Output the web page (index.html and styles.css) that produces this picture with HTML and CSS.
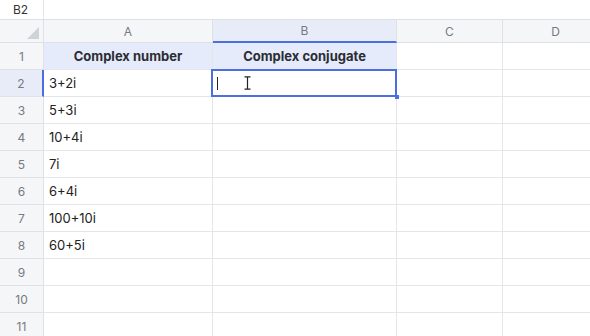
FILE: index.html
```html
<!DOCTYPE html>
<html>
<head>
<meta charset="utf-8">
<link rel="stylesheet" href="styles.css">
</head>
<body>
<div class="topbar">
  <div class="namebox">B2</div>
  <div class="formula"></div>
</div>
<div class="sheet">
  <div class="corner"><span class="tri"></span></div>
  <div class="colhead">A</div>
  <div class="colhead sel">B</div>
  <div class="colhead">C</div>
  <div class="colhead">D</div>

  <div class="rowhead">1</div>
  <div class="cell th">Complex number</div>
  <div class="cell th">Complex conjugate</div>
  <div class="cell"></div>
  <div class="cell"></div>

  <div class="rowhead sel">2</div>
  <div class="cell">3+2i</div>
  <div class="cell active"><span class="frame"></span><span class="caret"></span>
    <svg class="ibeam" width="7" height="14" viewBox="0 0 7 14"><path d="M0.5 0.8h6M3.5 0.8v12.4M0.5 13.2h6" stroke="#222" stroke-width="1.2" fill="none"/></svg>
    <span class="handle"></span>
  </div>
  <div class="cell"></div>
  <div class="cell"></div>

  <div class="rowhead">3</div>
  <div class="cell">5+3i</div>
  <div class="cell"></div>
  <div class="cell"></div>
  <div class="cell"></div>

  <div class="rowhead">4</div>
  <div class="cell">10+4i</div>
  <div class="cell"></div>
  <div class="cell"></div>
  <div class="cell"></div>

  <div class="rowhead">5</div>
  <div class="cell">7i</div>
  <div class="cell"></div>
  <div class="cell"></div>
  <div class="cell"></div>

  <div class="rowhead">6</div>
  <div class="cell">6+4i</div>
  <div class="cell"></div>
  <div class="cell"></div>
  <div class="cell"></div>

  <div class="rowhead">7</div>
  <div class="cell">100+10i</div>
  <div class="cell"></div>
  <div class="cell"></div>
  <div class="cell"></div>

  <div class="rowhead">8</div>
  <div class="cell">60+5i</div>
  <div class="cell"></div>
  <div class="cell"></div>
  <div class="cell"></div>

  <div class="rowhead">9</div>
  <div class="cell"></div>
  <div class="cell"></div>
  <div class="cell"></div>
  <div class="cell"></div>

  <div class="rowhead">10</div>
  <div class="cell"></div>
  <div class="cell"></div>
  <div class="cell"></div>
  <div class="cell"></div>

  <div class="rowhead">11</div>
  <div class="cell"></div>
  <div class="cell"></div>
  <div class="cell"></div>
  <div class="cell"></div>
</div>
</body>
</html>
```
FILE: styles.css
```css
* { box-sizing: border-box; }
html, body {
  margin: 0;
  padding: 0;
  background: #fff;
  overflow: hidden;
  font-family: Inter, "Noto Sans", "Liberation Sans", sans-serif;
  color: #222;
}
.topbar {
  display: flex;
  height: 20px;
  border-bottom: 1px solid #dcdfe3;
}
.namebox {
  width: 44px;
  border-right: 1px solid #e3e5e8;
  font-size: 12px;
  line-height: 19px;
  padding-left: 13px;
  color: #333;
}
.formula { flex: 1; }
.sheet {
  display: grid;
  grid-template-columns: 44px 169px 184px 106px 106px;
  grid-template-rows: 23px repeat(11, 27px);
}
.corner, .colhead, .rowhead {
  background: #f5f6f8;
  color: #777a80;
  font-size: 12px;
  border-right: 1px solid #dfe1e5;
  border-bottom: 1px solid #dfe1e5;
  display: flex;
  align-items: center;
  justify-content: center;
}
.corner { position: relative; }
.tri {
  position: absolute;
  right: 4px;
  bottom: 3px;
  width: 0;
  height: 0;
  border-left: 12px solid transparent;
  border-bottom: 12px solid #cfd2d7;
}
.colhead.sel {
  background: #e8ecf8;
  border-bottom: 2px solid #4a70df;
}
.rowhead.sel {
  background: #e8ecf8;
  border-right: 2px solid #4a70df;
}
.cell {
  border-right: 1px solid #e4e6e9;
  border-bottom: 1px solid #e4e6e9;
  font-size: 13px;
  display: flex;
  align-items: center;
  padding-left: 5px;
  color: #222;
}
.cell.th {
  background: #e6ebfb;
  font-weight: 700;
  justify-content: center;
  padding-left: 0;
  color: #2b2d33;
}
.cell.active {
  position: relative;
  z-index: 1;
}
.frame {
  position: absolute;
  top: -1px;
  left: -2px;
  right: -1px;
  bottom: -1px;
  border: 2.5px solid #4a70df;
}
.caret {
  position: absolute;
  left: 4px;
  top: 7px;
  width: 1px;
  height: 13px;
  background: #222;
}
.ibeam {
  position: absolute;
  left: 31px;
  top: 6px;
}
.handle {
  position: absolute;
  right: -3px;
  bottom: -3px;
  width: 4px;
  height: 4px;
  background: #4a70df;
}
```
